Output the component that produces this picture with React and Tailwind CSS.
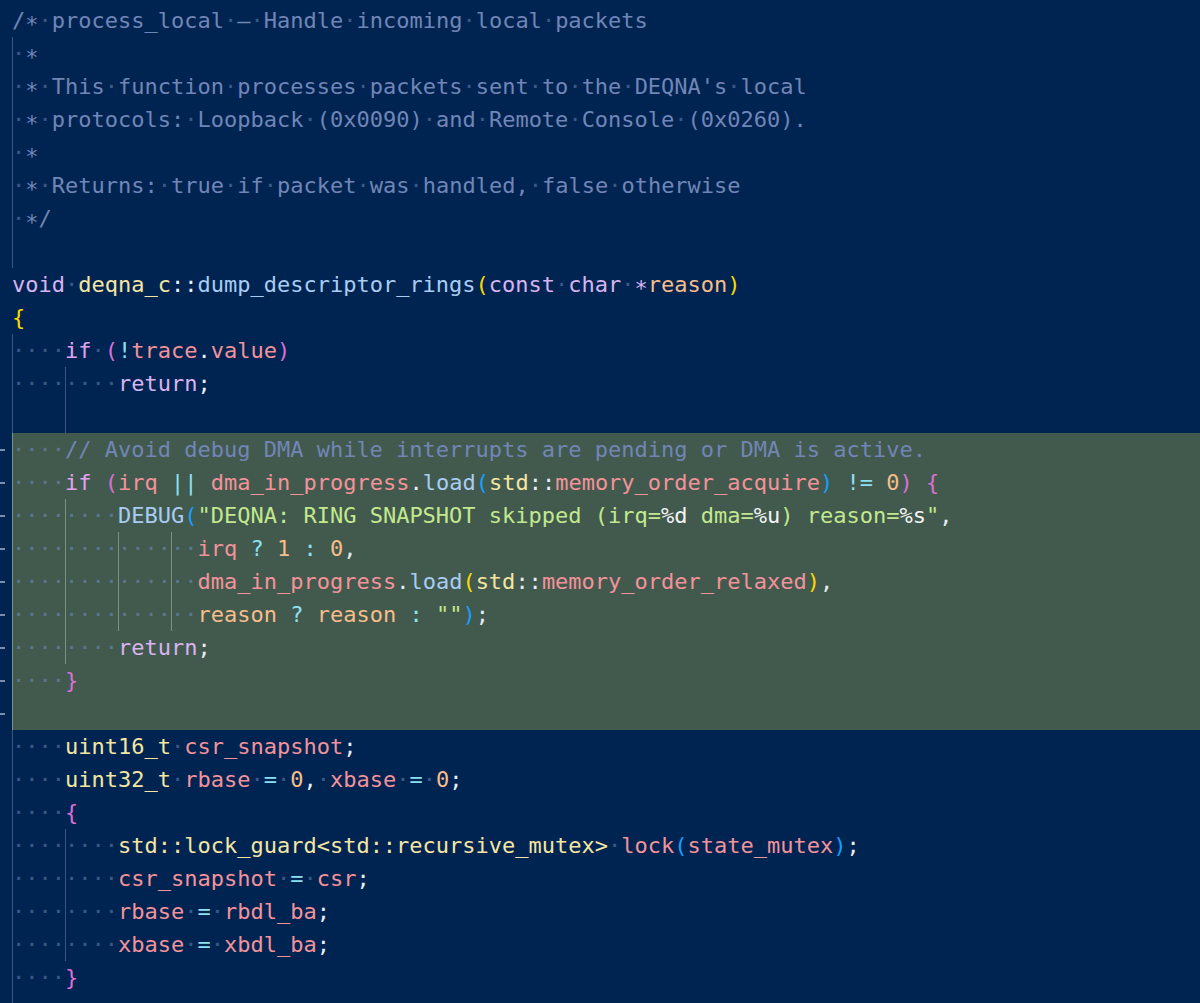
import React from "react";

const CM = "text-[#7285b7]";
const K = "text-[#d8b4f0]";
const KI = "text-[#e2a2f2]";
const TY = "text-[#f5e6a2]";
const FN = "text-[#a9cdf2]";
const V = "text-[#f3929a]";
const P = "text-[#f8bd8a]";
const OP = "text-[#8ee0f0]";
const N = "text-[#f8bd8a]";
const S = "text-[#c3e88d]";
const W = "text-[#e6edf3]";
const FMT = "text-[#f4f4f4]";
const B1 = "text-[#ffd700]";
const B2 = "text-[#da70d6]";
const B3 = "text-[#179fff]";

const DOT_N = "text-[#3b5886]";
const DOT_H = "text-[#5d7690]";
const G_N = "shadow-[inset_1px_0_0_0_#3c5482]";
const G_H = "shadow-[inset_1px_0_0_0_#7d9183]";

const lines = [
  { toks: [[CM, "/*·process_local·–·Handle·incoming·local·packets"]] },
  { pre: "·", g: [0], toks: [[CM, "*"]] },
  { pre: "·", g: [0], toks: [[CM, "*·This·function·processes·packets·sent·to·the·DEQNA's·local"]] },
  { pre: "·", g: [0], toks: [[CM, "*·protocols:·Loopback·(0x0090)·and·Remote·Console·(0x0260)."]] },
  { pre: "·", g: [0], toks: [[CM, "*"]] },
  { pre: "·", g: [0], toks: [[CM, "*·Returns:·true·if·packet·was·handled,·false·otherwise"]] },
  { pre: "·", g: [0], toks: [[CM, "*/"]] },
  { pre: " ", g: [0], toks: [] },
  {
    toks: [
      [K, "void·"], [TY, "deqna_c"], [W, "::"], [FN, "dump_descriptor_rings"], [B1, "("],
      [K, "const·char·*"], [P, "reason"], [B1, ")"],
    ],
  },
  { toks: [[B1, "{"]] },
  {
    pre: "····", g: [0],
    toks: [[KI, "if·"], [B2, "("], [OP, "!"], [V, "trace"], [W, "."], [V, "value"], [B2, ")"]],
  },
  { pre: "········", g: [0, 4], toks: [[K, "return"], [W, ";"]] },
  { pre: "        ", g: [0, 4], toks: [] },
  { hl: true, pre: "····", g: [0], toks: [[CM, "// Avoid debug DMA while interrupts are pending or DMA is active."]] },
  {
    hl: true, pre: "····", g: [0],
    toks: [
      [KI, "if "], [B2, "("], [V, "irq "], [OP, "|| "], [V, "dma_in_progress"], [W, "."], [FN, "load"],
      [B3, "("], [TY, "std"], [W, "::"], [V, "memory_order_acquire"], [B3, ")"], [W, " "], [OP, "!= "],
      [N, "0"], [B2, ")"], [W, " "], [B2, "{"],
    ],
  },
  {
    hl: true, pre: "········", g: [0, 4],
    toks: [
      [FN, "DEBUG"], [B3, "("], [S, "\"DEQNA: RING SNAPSHOT skipped (irq="], [FMT, "%d"], [S, " dma="],
      [FMT, "%u"], [S, ") reason="], [FMT, "%s"], [S, "\""], [W, ","],
    ],
  },
  {
    hl: true, pre: "··············", g: [0, 4, 8, 12],
    toks: [[V, "irq "], [OP, "? "], [N, "1 "], [OP, ": "], [N, "0"], [W, ","]],
  },
  {
    hl: true, pre: "··············", g: [0, 4, 8, 12],
    toks: [
      [V, "dma_in_progress"], [W, "."], [FN, "load"], [B1, "("], [TY, "std"], [W, "::"],
      [V, "memory_order_relaxed"], [B1, ")"], [W, ","],
    ],
  },
  {
    hl: true, pre: "··············", g: [0, 4, 8, 12],
    toks: [[P, "reason "], [OP, "? "], [P, "reason "], [OP, ": "], [S, "\"\""], [B3, ")"], [W, ";"]],
  },
  { hl: true, pre: "········", g: [0, 4], toks: [[K, "return"], [W, ";"]] },
  { hl: true, pre: "····", g: [0], toks: [[B2, "}"]] },
  { hl: true, pre: " ", g: [0], toks: [] },
  { pre: "····", g: [0], toks: [[TY, "uint16_t·"], [V, "csr_snapshot"], [W, ";"]] },
  {
    pre: "····", g: [0],
    toks: [
      [TY, "uint32_t·"], [V, "rbase·"], [OP, "=·"], [N, "0"], [W, ",·"], [V, "xbase·"], [OP, "=·"],
      [N, "0"], [W, ";"],
    ],
  },
  { pre: "····", g: [0], toks: [[B2, "{"]] },
  {
    pre: "········", g: [0, 4],
    toks: [
      [TY, "std::lock_guard<std::recursive_mutex>·"], [V, "lock"], [B3, "("], [V, "state_mutex"],
      [B3, ")"], [W, ";"],
    ],
  },
  { pre: "········", g: [0, 4], toks: [[V, "csr_snapshot·"], [OP, "=·"], [V, "csr"], [W, ";"]] },
  { pre: "········", g: [0, 4], toks: [[V, "rbase·"], [OP, "=·"], [V, "rbdl_ba"], [W, ";"]] },
  { pre: "········", g: [0, 4], toks: [[V, "xbase·"], [OP, "=·"], [V, "xbdl_ba"], [W, ";"]] },
  { pre: "····", g: [0], toks: [[B2, "}"]] },
  { pre: " ", g: [0], toks: [] },
];

function renderText(text, color, dotCls, keyBase) {
  const parts = text.split(/(·|\*)/);
  const out = [];
  parts.forEach((p, i) => {
    if (!p) return;
    if (p === "·") {
      out.push(
        <span key={keyBase + "d" + i} className={dotCls}>
          ·
        </span>
      );
    } else if (p === "*") {
      out.push(
        <span key={keyBase + "s" + i} className={"relative top-[4px] " + color}>
          *
        </span>
      );
    } else {
      out.push(
        <span key={keyBase + "p" + i} className={color}>
          {p}
        </span>
      );
    }
  });
  return out;
}

function Line({ line }) {
  const hl = !!line.hl;
  const dotCls = hl ? DOT_H : DOT_N;
  const gCls = hl ? G_H : G_N;
  const pre = line.pre || "";
  const guides = line.g || [];
  const bounds = Array.from(new Set([0, ...guides.filter((c) => c < pre.length), pre.length])).sort(
    (a, b) => a - b
  );
  const chunks = [];
  for (let i = 0; i < bounds.length - 1; i++) {
    const a = bounds[i];
    const b = bounds[i + 1];
    if (b > a) chunks.push({ text: pre.slice(a, b), guide: guides.includes(a) });
  }
  return (
    <div className="flex h-[33px]">
      <div className="w-[12px] shrink-0 flex items-center">
        {hl && <div className="w-[5px] h-[2px] bg-[#7b8db0]" />}
      </div>
      <div className={"flex flex-1 whitespace-pre " + (hl ? "bg-[#415a4d]" : "")}>
        {chunks.map((c, i) => (
          <span key={"c" + i} className={"h-[33px] " + dotCls + " " + (c.guide ? gCls : "")}>
            {c.text}
          </span>
        ))}
        <span className="h-[33px]">
          {line.toks.map((t, i) => renderText(t[1], t[0], dotCls, "t" + i))}
        </span>
      </div>
    </div>
  );
}

export default function App() {
  return (
    <div className="w-[1200px] h-[1003px] overflow-hidden bg-[#002451] pt-[4px] font-['DejaVu_Sans_Mono',monospace] text-[22px] leading-[33px]">
      {lines.map((l, i) => (
        <Line key={i} line={l} />
      ))}
    </div>
  );
}
